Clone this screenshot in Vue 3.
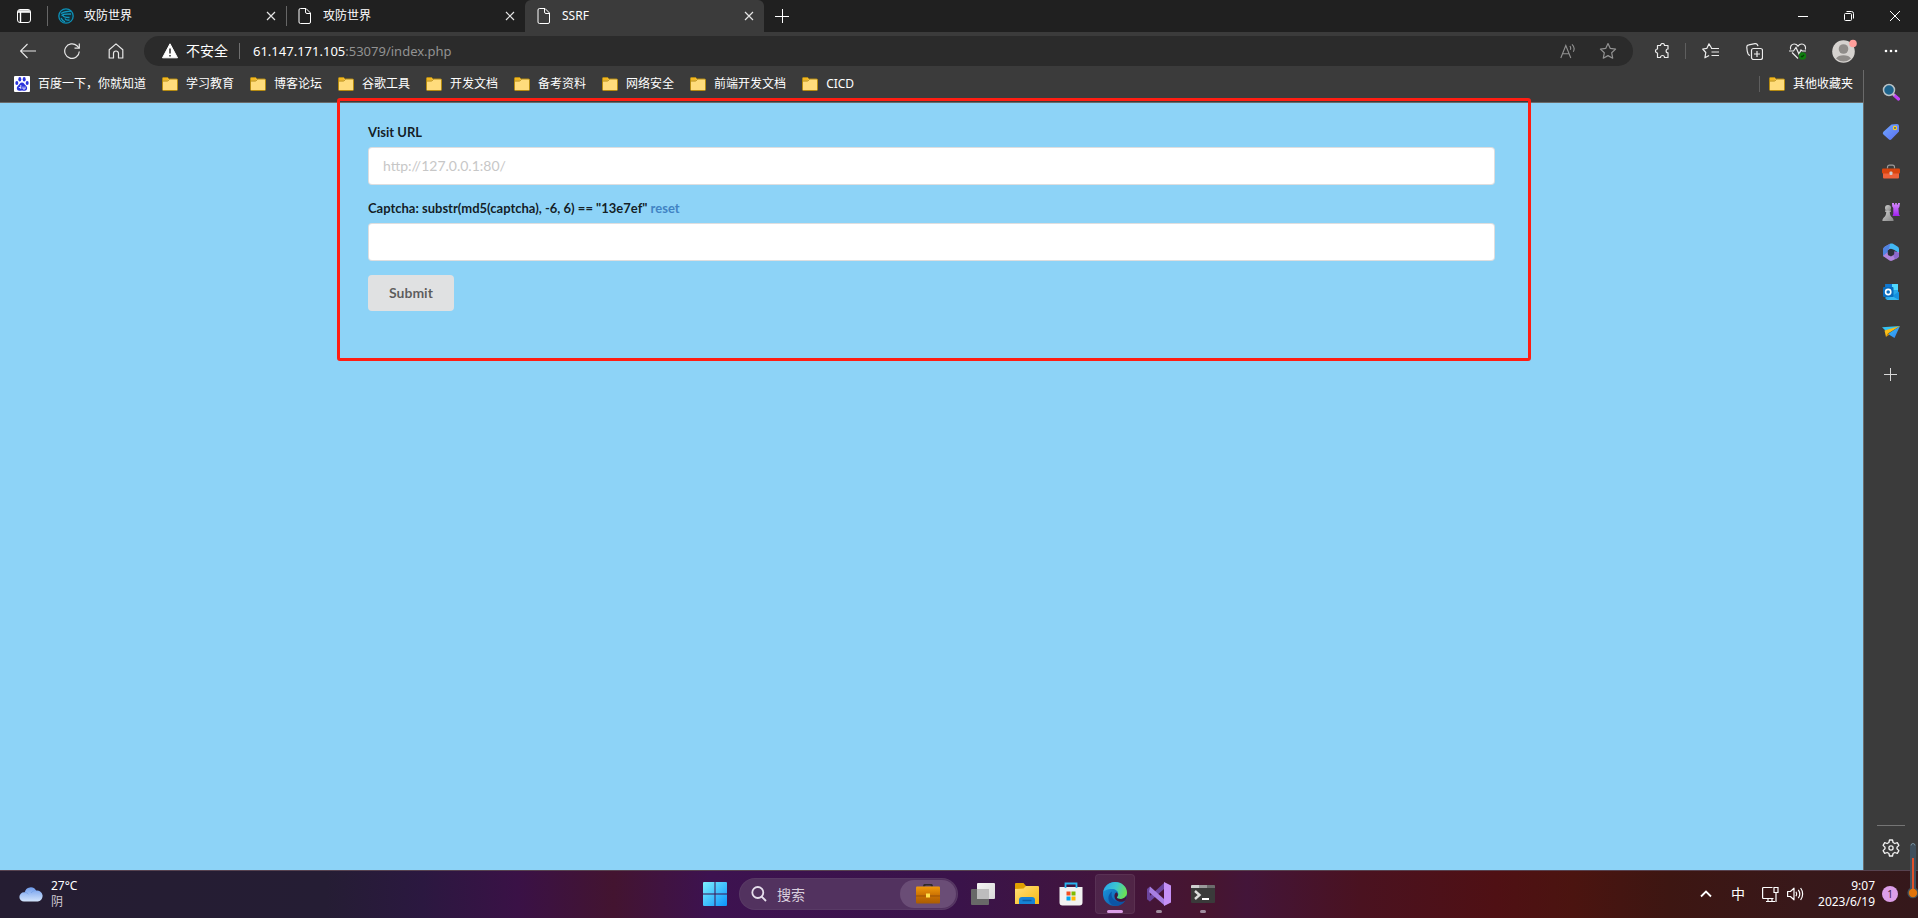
<template>
  <div class="screen">
    <!-- 共用渐变 -->
    <svg class="defs" width="0" height="0" aria-hidden="true">
      <defs>
        <linearGradient id="g-win" x1="0" y1="0" x2="1" y2="1"><stop offset="0" stop-color="#7df0ff"/><stop offset="1" stop-color="#0a93fb"/></linearGradient>
        <linearGradient id="g-cloud" x1="0" y1="0" x2="0" y2="1"><stop offset="0" stop-color="#6f9cec"/><stop offset="1" stop-color="#d3e4fc"/></linearGradient>
        <linearGradient id="g-case" x1="0" y1="0" x2="0" y2="1"><stop offset="0" stop-color="#f09a0c"/><stop offset="0.55" stop-color="#c96f02"/><stop offset="1" stop-color="#a95c03"/></linearGradient>
        <linearGradient id="g-tag" x1="0" y1="0" x2="1" y2="1"><stop offset="0" stop-color="#6fa8ff"/><stop offset="1" stop-color="#5b6ff2"/></linearGradient>
        <linearGradient id="g-pawn" x1="0" y1="0" x2="1" y2="1"><stop offset="0" stop-color="#d0d0d0"/><stop offset="1" stop-color="#858585"/></linearGradient>
        <linearGradient id="g-rook" x1="0" y1="0" x2="0" y2="1"><stop offset="0" stop-color="#d58cff"/><stop offset="1" stop-color="#a020f0"/></linearGradient>
        <linearGradient id="g-folder" x1="0" y1="0" x2="1" y2="1"><stop offset="0" stop-color="#ffe07a"/><stop offset="1" stop-color="#f8b912"/></linearGradient>
        <linearGradient id="g-edge-top" x1="0" y1="0.3" x2="1" y2="0.6"><stop offset="0" stop-color="#2aa7ea"/><stop offset="0.5" stop-color="#3cc6cf"/><stop offset="1" stop-color="#6fe34c"/></linearGradient>
        <linearGradient id="g-edge-bottom" x1="0" y1="0" x2="1" y2="1"><stop offset="0" stop-color="#1b9de2"/><stop offset="1" stop-color="#0a4da0"/></linearGradient>
        <linearGradient id="g-plane" x1="0" y1="0" x2="1" y2="1"><stop offset="0" stop-color="#2ec8f5"/><stop offset="1" stop-color="#3a7cf0"/></linearGradient>
        <linearGradient id="g-view" x1="0" y1="0" x2="1" y2="1"><stop offset="0" stop-color="#f4f4f4"/><stop offset="1" stop-color="#d8d8d8"/></linearGradient>
      </defs>
    </svg>

    <!-- 标签栏 -->
    <header class="titlebar">
      <button class="btn tab-actions" aria-label="Tab actions">
        <svg width="16" height="16" viewBox="0 0 16 16" fill="none" stroke="#fff"><rect x="1.5" y="1.5" width="13" height="13" rx="2.5"/><path d="M2.5 3h11" stroke-width="1.5"/><path d="M2 4h12M4.5 4.5v10" stroke-width="1.4"/></svg>
      </button>
      <div v-for="tab in tabs" :key="tab.id" class="tab" :class="{ 'tab--active': tab.active }">
        <svg v-if="tab.icon === 'globe'" width="16" height="16" viewBox="0 0 16 16"><circle cx="8" cy="8" r="7.2" fill="#10303b" stroke="#0e8fb5" stroke-width="1.3"/><path d="M3 5.5c3-2.5 6-2 10-2.4M3.5 7.5C6 5.5 9 6.5 13 6M5 7.5c.5 2 3 2 6.5 2M7 10.5c.5 1.5 2.5 1.8 4.5 1.5M3 10c1 2 2 3 4 3.8" fill="none" stroke="#1298bf" stroke-width="1.3"/></svg>
        <svg v-else width="16" height="16" viewBox="0 0 16 16" fill="none" stroke="#fff"><path d="M3.5.5h5.5l4.5 4.5v9a1.5 1.5 0 0 1-1.5 1.5H3.5A1.5 1.5 0 0 1 2 14V2A1.5 1.5 0 0 1 3.5.5z"/><path d="M8.5.5v3.5a1.5 1.5 0 0 0 1.5 1.5h3.5"/></svg>
        <span class="tab__title">{{ tab.title }}</span>
        <button class="btn tab__close" aria-label="Close tab">
          <svg width="10" height="10" viewBox="0 0 10 10" stroke="#e4e4e4" stroke-width="1.2"><path d="M1 1l8 8M9 1L1 9"/></svg>
        </button>
      </div>
      <button class="btn new-tab" aria-label="New tab">
        <svg width="14" height="14" viewBox="0 0 14 14" stroke="#fff"><path d="M7.5 0v14M0 7.5h14"/></svg>
      </button>
      <div class="window-controls">
        <button class="btn" aria-label="Minimize"><svg width="10" height="10" viewBox="0 0 10 10" stroke="#fff"><path d="M0 5.5h10"/></svg></button>
        <button class="btn" aria-label="Restore"><svg width="10" height="10" viewBox="0 0 10 10" fill="none" stroke="#fff"><rect x=".5" y="2.5" width="7" height="7" rx="1"/><path d="M2.5.5h5a2 2 0 0 1 2 2v5"/></svg></button>
        <button class="btn" aria-label="Close"><svg width="10" height="10" viewBox="0 0 10 10" stroke="#fff"><path d="M0 0l10 10M10 0L0 10"/></svg></button>
      </div>
    </header>

    <!-- 地址栏 -->
    <nav class="toolbar">
      <button class="btn tool" aria-label="Back"><svg width="16" height="16" viewBox="0 0 16 16" fill="none" stroke="#e8e8e8" stroke-width="1.1"><path d="M16 8H.8M7.5 1l-7 7 7 7"/></svg></button>
      <button class="btn tool" aria-label="Reload"><svg width="16" height="16" viewBox="0 0 16 16" fill="none" stroke="#e8e8e8" stroke-width="1.2"><path d="M15.3 8.5A7.3 7.3 0 1 1 13 2.8l2 2"/><path d="M15.3.5v4.7h-4.8"/></svg></button>
      <button class="btn tool" aria-label="Home"><svg width="16" height="16" viewBox="0 0 16 16" fill="none" stroke="#e8e8e8" stroke-width="1.2"><path d="M1.2 6.8L8 .9l6.8 5.9V15h-4.3v-4.5a2.5 2.5 0 0 0-5 0V15H1.2z" stroke-linejoin="round"/></svg></button>
      <div class="address">
        <svg width="16" height="16" viewBox="0 0 16 16"><path d="M8 .8L15.5 14.8H.5z" fill="#fff" stroke="#fff" stroke-linejoin="round"/><path d="M8 5.5v5M8 12v1.6" stroke="#2b2b2b" stroke-width="1.5"/></svg>
        <span class="address__warn">不安全</span>
        <span class="address__sep"></span>
        <span class="address__url"><b>61.147.171.105</b>:53079/index.php</span>
        <button class="btn address__btn" aria-label="Read aloud"><svg width="16" height="16" viewBox="0 0 16 16" fill="none" stroke="#929292" stroke-width="1.1"><path d="M.8 15L5.8 2.5 10.8 15M2.5 10.8h6.6M9.8 3.2c1 1 1 2.5.5 3.6M12 1.3c2.2 2 2.6 5 1.3 7.5"/></svg></button>
        <button class="btn address__btn" aria-label="Favorite"><svg width="18" height="18" viewBox="0 0 18 18" fill="none" stroke="#929292" stroke-width="1.2" stroke-linejoin="round"><path d="M9 1.5l2.3 4.9 5.3.7-3.9 3.7 1 5.4L9 13.6l-4.7 2.6 1-5.4L1.4 7.1l5.3-.7z"/></svg></button>
      </div>
      <button class="btn tool" aria-label="Extensions"><svg width="16" height="16" viewBox="0 0 16 16" fill="none" stroke="#ececec" stroke-width="1.2" stroke-linejoin="round"><path d="M3.500 2.500h3a2 2 0 0 1 4 0H14V6a1.600 1.600 0 0 0 0 3.800v4.700h-3.500a2 2 0 0 0-4 0h-3V10a2 2 0 0 1 0-4z"/></svg></button>
      <span class="toolbar__sep"></span>
      <button class="btn tool" aria-label="Favorites"><svg width="17" height="16" viewBox="0 0 17 16" fill="none" stroke="#ececec" stroke-width="1.2" stroke-linejoin="round"><path d="M9.5 5L7 .8 4.9 5.3.7 6l3.1 3.5-.9 5.3 4.2-2.3"/><path d="M9 5.5h8M9.5 9h7.5M9.5 12.5h7.5"/></svg></button>
      <button class="btn tool" aria-label="Collections"><svg width="17" height="17" viewBox="0 0 17 17" fill="none" stroke="#ececec" stroke-width="1.2"><rect x="5.5" y="5.5" width="11" height="11" rx="2"/><path d="M11 8v6M8 11h6M4 12.5C2 12 1.5 10 1.2 8L.8 4.5C.6 3 1.5 2 2.8 1.8L9 .7c1.5-.2 2.5.5 3 2.5"/></svg></button>
      <button class="btn tool" aria-label="Browser essentials"><svg width="18" height="17" viewBox="0 0 18 17" fill="none" stroke="#ececec" stroke-width="1.2"><path d="M1.6 6.5C.8 3 3 1 5.2 1 7 1 8.2 2 9 3.2 9.8 2 11 1 12.8 1c2.5 0 4.5 2.5 3.6 5.5M3 9.5l6 6"/><path d="M0 8h4.5L7 4.500l3 6.500 2-4 1.200 1H17"/><circle cx="13.5" cy="13" r="3.7" fill="#107c10" stroke="none"/><path d="M12 13l1 1 2-2" stroke="#053b05"/></svg></button>
      <button class="btn tool tool--wide" aria-label="Profile"><svg width="26" height="24" viewBox="0 0 26 24"><circle cx="12.5" cy="12.5" r="11.3" fill="#d5d2cf"/><circle cx="12.5" cy="10" r="4.8" fill="#8f8c89"/><path d="M5 19.5c2-4.500 13-4.500 15 0a11 11 0 0 1-15 0z" fill="#8f8c89"/><circle cx="22" cy="4.5" r="3.8" fill="#ff9f9b"/></svg></button>
      <button class="btn tool tool--wide" aria-label="Settings and more"><svg width="14" height="4" viewBox="0 0 14 4" fill="#fff"><circle cx="2" cy="2" r="1.3"/><circle cx="7" cy="2" r="1.3"/><circle cx="12" cy="2" r="1.3"/></svg></button>
    </nav>

    <div class="body">
      <div class="content">
        <!-- 收藏夹栏 -->
        <div class="bookmarks">
          <a v-for="item in bookmarks" :key="item" class="bookmark" :class="{ 'bookmark--other': item === '其他收藏夹' }" href="#">
            <svg v-if="item.startsWith('百度')" width="16" height="16" viewBox="0 0 16 16"><rect width="16" height="16" rx="1" fill="#fff"/><g fill="#2a32dc"><ellipse cx="2.8" cy="7" rx="1.5" ry="2"/><ellipse cx="5.8" cy="3.2" rx="1.5" ry="2.2"/><ellipse cx="10.2" cy="3.2" rx="1.5" ry="2.2"/><ellipse cx="13.2" cy="7" rx="1.5" ry="2"/><path d="M8 6.5c2 0 2.5 2 4 3.2 2 1.6 1.3 5-1.2 5-1 0-1.8-.3-2.8-.3s-1.8.3-2.8.3c-2.5 0-3.2-3.4-1.2-5C5.5 8.5 6 6.5 8 6.5z"/></g><path d="M6.8 9v4M4.8 11.5h2M9 10.5V13h2v-2.5" stroke="#fff" stroke-width=".8" fill="none"/></svg>
            <svg v-else width="16" height="14" viewBox="0 0 16 14"><path d="M.5 1.5a1 1 0 0 1 1-1h4L7.2 2h7.3a1 1 0 0 1 1 1v9.5a1 1 0 0 1-1 1h-13a1 1 0 0 1-1-1z" fill="#ffdc7c" stroke="#b58a10"/><path d="M1 1h4.5l1 1.2L5.3 3.5H1z" fill="#f3b61f"/><path d="M.8 4h5L7.3 2.3" stroke="#b58a10" fill="none"/></svg>
            <span>{{ item }}</span>
          </a>
        </div>

        <main class="page">
          <form class="form" @submit.prevent>
            <div class="field">
              <label for="url">Visit URL</label>
              <input id="url" v-model="url" type="text" placeholder="http://127.0.0.1:80/">
            </div>
            <div class="field">
              <label for="captcha">Captcha: substr(md5(captcha), -6, 6) == "13e7ef" <a href="#">reset</a></label>
              <input id="captcha" v-model="captcha" type="text">
            </div>
            <button class="submit" type="submit">Submit</button>
            <div class="marker"></div>
          </form>
        </main>
      </div>

      <!-- 右侧边栏 -->
      <aside class="sidebar">
        <button class="btn side" aria-label="Search"><svg width="18" height="18" viewBox="0 0 18 18"><path d="M12 12l4.5 4" stroke="#c040f5" stroke-width="3.2" stroke-linecap="round"/><path d="M10 10l2.5 2.5" stroke="#b9b9b9" stroke-width="2"/><circle cx="7" cy="7" r="5.5" fill="#1d638c" stroke="#b9c2c6" stroke-width="1.5"/></svg></button>
        <button class="btn side" aria-label="Shopping"><svg width="18" height="18" viewBox="0 0 18 18"><path d="M9.5 1.5L15 1a2 2 0 0 1 2 2v5.5l-7.5 7.8a2 2 0 0 1-2.800 0L1.4 11.5a2 2 0 0 1 0-2.8z" fill="url(#g-tag)"/><circle cx="13" cy="5" r="1.6" fill="#3958a8" stroke="#ffd21f" stroke-width="1.2"/></svg></button>
        <button class="btn side" aria-label="Tools"><svg width="18" height="16" viewBox="0 0 18 16"><path d="M5.5 4.500V3.200a2 2 0 0 1 2-2h3a2 2 0 0 1 2 2v1.300" fill="none" stroke="#9c9c9c" stroke-width="1.2"/><path d="M1 9h16v4.5a1 1 0 0 1-1 1H2a1 1 0 0 1-1-1z" fill="#ee6239"/><rect x="0" y="4.5" width="18" height="5" rx="1" fill="#d8450f"/><rect x="7.5" y="7.5" width="3" height="3.5" rx="1" fill="#cfcfcf"/></svg></button>
        <button class="btn side" aria-label="Games"><svg width="18" height="18" viewBox="0 0 18 18"><path d="M10 0h2v1.5h1.2V0h1.6v1.5H16V0h2l-.6 4-1 1.2.5 6 1.1 1.8h-7.5l.8-2V5L10.2 3.5z" fill="url(#g-rook)"/><circle cx="6" cy="5" r="3" fill="url(#g-pawn)"/><path d="M3 7.5h6v1.3H7.7c.2 3 .8 4.4 2.5 5.7 1.2.8 1.6 3.500 1.300 3.500H.5c-.3 0 .1-2.700 1.300-3.500 1.700-1.300 2.300-2.700 2.500-5.700H3z" fill="url(#g-pawn)"/></svg></button>
        <button class="btn side" aria-label="Microsoft 365"><svg width="18" height="18" viewBox="0 0 18 18"><path d="M8 .8L3 3.500a4 4 0 0 0-2 3.500v6l4.800 2V7.500L9 5z" fill="#8a7fe0"/><path d="M8 .8c1-.5 2-.5 3 0L15.500 3.500A3 3 0 0 1 17 6v4l-5-3.200-5-1.300z" fill="#42b8f3"/><path d="M8 .8L7 5.500 5.800 8v4L1 13V7a4 4 0 0 1 2-3.500z" fill="#4f83e0"/><path d="M1 13l4.800-4v3l3.200 1.500 3.200-2V9l4.800 0v3.500a3 3 0 0 1-1.500 2.500L10.500 17.500c-1 .5-2 .5-3 0z" fill="#b184dc"/><path d="M17 10v2.500a3 3 0 0 1-1.500 2.500L13 16.300l-2-4 1.200-1V8z" fill="#8b68cb"/><path d="M9 5.700l3.200 1.800v3.600L9 12.900l-3.200-1.800V7.500z" fill="#2c2f38"/></svg></button>
        <button class="btn side" aria-label="Outlook"><svg width="18" height="18" viewBox="0 0 18 18"><rect x="3.5" y="1" width="12.5" height="15" fill="#28a8ea"/><path d="M10 1h6v6h-6z" fill="#50d9ff"/><path d="M3.5 1H10v5H3.5z" fill="#0f78d4"/><path d="M17 8.5V17H4l7-4.500z" fill="#1490df"/><path d="M4 17l6-4 7 4z" fill="#35b8f1"/><rect x="1" y="4" width="10.5" height="10" rx="1" fill="#0a6cbd"/><circle cx="6.2" cy="9" r="2.6" fill="none" stroke="#fff" stroke-width="1.6"/></svg></button>
        <button class="btn side" aria-label="Drop"><svg width="18" height="14" viewBox="0 0 18 14"><path d="M0 2.2L18 1 5 7z" fill="#35c3f3"/><path d="M18 1l-5.5 12-6.5-4z" fill="url(#g-plane)"/><path d="M18 1L2.5 5.5 4 12l2-3.5z" fill="#f9bd17"/><path d="M4 12l2-3.5 1.5 1z" fill="#d98d00"/></svg></button>
        <button class="btn side side--add" aria-label="Add"><svg width="14" height="14" viewBox="0 0 14 14" stroke="#d8d8d8"><path d="M6.5 0v13M0 6.5h13"/></svg></button>
        <div class="sidebar__bottom">
          <button class="btn side" aria-label="Settings"><svg width="18" height="18" viewBox="0 0 18 18" fill="none" stroke="#f2f2f2" stroke-width="1.3" stroke-linejoin="round"><path d="M7.5 1h3l.6 2.5 1.7 1 2.5-.8 1.6 2.7L15 8.2v1.6l1.9 1.8-1.6 2.7-2.5-.8-1.7 1-.6 2.5h-3l-.6-2.5-1.7-1-2.5.8-1.6-2.7L3 9.8V8.2L1.1 6.400l1.600-2.700 2.500.800 1.700-1z"/><circle cx="9" cy="9" r="2.1"/></svg></button>
        </div>
      </aside>
    </div>

    <!-- 任务栏 -->
    <footer class="taskbar">
      <button class="btn weather">
        <svg width="24" height="16" viewBox="0 0 24 16"><path d="M5 15.5a4.5 4.5 0 0 1 0-9.2h.8A6 6 0 0 1 17 4.5a5.5 5.5 0 0 1 2 11z" fill="url(#g-cloud)"/><path d="M5.8 6.3c2 .2 3 1 3.6 2M12 7c1.5-2 3-2.5 5-2.5" stroke="#7ba4ea" fill="none"/></svg>
        <span class="weather__text">27°C<br><em>阴</em></span>
      </button>

      <div class="dock">
        <button class="btn dock__item" aria-label="Start"><svg width="24" height="24" viewBox="0 0 24 24" fill="url(#g-win)"><path d="M0 1a1 1 0 0 1 1-1h10.5v11.5H0zM12.5 0H23a1 1 0 0 1 1 1v10.5H12.500zM0 12.500h11.500V24H1a1 1 0 0 1-1-1zM12.500 12.500H24V23a1 1 0 0 1-1 1H12.500z"/></svg></button>
        <div class="search">
          <svg width="16" height="16" viewBox="0 0 16 16" fill="none" stroke="#e6deec" stroke-width="1.8"><circle cx="6.8" cy="6.5" r="5.5"/><path d="M10.5 10.5l4.5 4.5"/></svg>
          <input type="text" aria-label="搜索" placeholder="搜索">
          <span class="search__badge"><svg width="24" height="20" viewBox="0 0 24 20"><path d="M8 2.5C8 .5 9 .5 10 .5h4c1 0 2 0 2 2" fill="none" stroke="#2f2a2a" stroke-width="2"/><rect y="2.5" width="24" height="17" rx="1" fill="url(#g-case)"/><path d="M0 11h24v2H0z" fill="#b06005"/><rect x="10" y="9.5" width="4" height="4" fill="#ffe04a"/></svg></span>
        </div>
        <button class="btn dock__item" aria-label="Task view"><svg width="24" height="24" viewBox="0 0 24 24"><rect x="0" y="7" width="18" height="16" rx="1" fill="#686868"/><rect x="6" y="1" width="18" height="16" rx="1" fill="url(#g-view)"/><path d="M6 7h12v10H6z" fill="#bdbcbd"/></svg></button>
        <button class="btn dock__item" aria-label="File explorer"><svg width="24" height="24" viewBox="0 0 24 24"><path d="M0 2a1 1 0 0 1 1-1h7.5L11 4v4H0z" fill="#e0a000"/><path d="M0 7l8.5-.5L11 4h12a1 1 0 0 1 1 1v17H0z" fill="url(#g-folder)"/><path d="M4 22v-4a3 3 0 0 1 3-3h10a3 3 0 0 1 3 3v4z" fill="#1683d6"/><path d="M7.5 18.5h9" stroke="#0c5da5" stroke-width="1.5"/></svg></button>
        <button class="btn dock__item" aria-label="Store"><svg width="24" height="24" viewBox="0 0 24 24"><path d="M.5 5h23v15.5a3 3 0 0 1-3 3h-17a3 3 0 0 1-3-3z" fill="#f2f2f2"/><path d="M6.5 6V1.500h11V6" fill="none" stroke="#28b4ef" stroke-width="1.8"/><path d="M7.500 9.500h4v4h-4z" fill="#f25022"/><path d="M12.500 9.500h4v4h-4z" fill="#7fba00"/><path d="M7.500 14.500h4v4h-4z" fill="#00a4ef"/><path d="M12.500 14.500h4v4h-4z" fill="#ffb900"/></svg></button>
        <button class="btn dock__item dock__item--active" aria-label="Edge"><svg width="24" height="24" viewBox="0 0 24 24"><circle cx="12" cy="12" r="12" fill="url(#g-edge-bottom)"/><path d="M.2 10C1.500 3.500 6.500 0 12 0c7 0 12 5 12 10.500 0 4-3 6.500-6.500 6.500-2.500 0-4-1-3.500-2 1-1 1.300-2 1.300-3 0-3-3-5-6.300-5C4.500 7 1 8.500.2 10z" fill="url(#g-edge-top)"/><path d="M9 9.500c-1.500 4.500.5 10 8 10.500 2 .1 4-.6 5.300-1.600C19.500 23 14.500 24.500 10.500 23.500 4 21.500 4 12.500 9 9.500z" fill="#0b55a6"/><path d="M14 15c-.6 1 1 2 3.500 2 2.700 0 4.800-1.300 5.800-3.400.5 2-.2 4-1.200 5-3 2.300-10.100 1.500-10.600-4.100-.2-1.700.5-3.500 2-4.300 1.500 1 2 3 .5 4.800z" fill="#42163c"/></svg></button>
        <button class="btn dock__item dock__item--open" aria-label="Visual Studio"><svg width="24" height="24" viewBox="0 0 24 24"><path d="M17 1L4.500 12.500 2 14.500V9.500L0 7v10l3 2.500L17 7z" fill="#6b459f"/><path d="M0 7l3-2.500V19.500L0 17z" fill="#6b459f"/><path d="M3 4.500L17 17v6L2 10z" fill="#a77fe2"/><path d="M17 0l7 3.500v17L17 24V0z" fill="#c590f7"/></svg></button>
        <button class="btn dock__item dock__item--open" aria-label="Terminal"><svg width="24" height="24" viewBox="0 0 24 24"><rect y="3" width="24" height="18" rx="1" fill="#3a3a3a"/><path d="M0 6V4a1 1 0 0 1 1-1h7v3z" fill="#cfcfcf"/><path d="M8 3h8v3H8z" fill="#9a9a9a"/><path d="M16 3h7a1 1 0 0 1 1 1v2h-8z" fill="#6c6c6c"/><path d="M4 9l4.500 4L4 17" stroke="#ddd" stroke-width="2.4" fill="none"/><path d="M11 17h7" stroke="#fff" stroke-width="2"/></svg></button>
      </div>

      <div class="tray">
        <button class="btn tray__chevron" aria-label="Hidden icons"><svg width="12" height="8" viewBox="0 0 12 8" fill="none" stroke="#fff" stroke-width="1.8"><path d="M1 6.5l5-5 5 5"/></svg></button>
        <button class="btn tray__ime">中</button>
        <button class="btn tray__status" aria-label="Network and volume">
          <svg width="17" height="17" viewBox="0 0 17 17" fill="none" stroke="#fff" stroke-width="1.2"><path d="M10.5 1.5h-9a.9.9 0 0 0-.9.9v9.2a.9.9 0 0 0 .9.9h10M4 15.5h9M6 12.500v3M10 12.500v3M12 1.500h4v5h-4zM14 6.500v9.500"/></svg>
          <svg width="17" height="14" viewBox="0 0 17 14" fill="none" stroke="#fff" stroke-width="1.2"><path d="M.6 4.500h2.800L7 1.200v11.600L3.400 9.500H.6z" stroke-linejoin="round"/><path d="M9 4.700c.9 1.400.9 3.200 0 4.600M11.300 2.800c1.800 2.500 1.800 5.900 0 8.400M13.600 1c2.700 3.500 2.700 8.500 0 12"/></svg>
        </button>
        <button class="btn clock">9:07<br>2023/6/19</button>
        <span class="tray__count">1</span>
      </div>
    </footer>

    <!-- 悬浮温度计 -->
    <svg class="thermo" width="12" height="56" viewBox="0 0 12 56"><path d="M3 4a3 3 0 0 1 6 0v41a5.600 5.600 0 1 1-6 0z" fill="#3f4f5c"/><path d="M4 2.500a2 2 0 0 1 4 0" fill="none" stroke="#77909f"/><path d="M6 15v35" stroke="#e0502a" stroke-width="2"/><circle cx="6" cy="50" r="4.200" fill="#e0740c"/></svg>
  </div>
</template>

<script setup>
import { ref } from 'vue'

const url = ref('')
const captcha = ref('')

const tabs = [
  { id: 1, title: '攻防世界', icon: 'globe', active: false },
  { id: 2, title: '攻防世界', icon: 'file', active: false },
  { id: 3, title: 'SSRF', icon: 'file', active: true }
]

const bookmarks = [
  '百度一下，你就知道',
  '学习教育',
  '博客论坛',
  '谷歌工具',
  '开发文档',
  '备考资料',
  '网络安全',
  '前端开发文档',
  'CICD',
  '其他收藏夹'
]
</script>

<style>
body {
  margin: 0;
  background: #8dd3f7;
}
</style>

<style scoped>
.screen {
  position: relative;
  display: flex;
  flex-direction: column;
  min-height: 100vh;
  font-family: "Noto Sans", "Noto Sans CJK SC", sans-serif;
  font-size: 12px;
  line-height: 16px;
  color: #fff;
}

.screen *,
.screen *::before {
  box-sizing: border-box;
}

.defs {
  position: absolute;
}

.btn {
  display: flex;
  align-items: center;
  justify-content: center;
  padding: 0;
  border: none;
  background: none;
  color: inherit;
  font: inherit;
}

svg {
  flex: none;
}

/* 标签栏 */
.titlebar {
  display: flex;
  height: 32px;
  background: #202020;
}

.tab-actions {
  width: 47px;
  height: 26px;
  align-self: center;
}

.tab {
  display: flex;
  align-items: center;
  gap: 10px;
  flex: 0 1 239px;
  min-width: 0;
  padding: 0 10px 0 11px;
  background: linear-gradient(#666, #666) left center / 1px 20px no-repeat;
}

.tab--active {
  background: #3b3b3b;
  border-radius: 6px 6px 0 0;
}

.tab__title {
  flex: 1;
  white-space: nowrap;
  overflow: hidden;
}

.new-tab {
  width: 36px;
}

.window-controls {
  display: flex;
  margin-left: auto;
}

.window-controls .btn {
  width: 46px;
}

/* 地址栏 */
.toolbar {
  display: flex;
  align-items: center;
  height: 38px;
  padding: 0 4px 0 6px;
  background: #3b3b3b;
}

.tool {
  width: 44px;
  height: 30px;
}

.tool--wide {
  width: 47px;
}

.address {
  flex: 1;
  display: flex;
  align-items: center;
  height: 30px;
  margin: 0 7px 0 6px;
  padding: 0 5px 0 18px;
  border-radius: 15px;
  background: #2b2b2b;
}

.address__warn {
  margin-left: 8px;
  font-size: 14px;
}

.address__sep {
  width: 1px;
  height: 16px;
  margin: 0 13px 0 11px;
  background: #6f6f6f;
}

.address__url {
  flex: 1;
  font-size: 13px;
  color: #929292;
}

.address__url b {
  font-weight: 400;
  color: #fff;
}

.address__btn {
  width: 40px;
}

.toolbar__sep {
  width: 1px;
  height: 16px;
  margin: 0 2px 0 1px;
  background: #5e5e5e;
}

/* 主体 */
.body {
  flex: 1;
  display: flex;
}

.content {
  flex: 1;
  display: flex;
  flex-direction: column;
  min-width: 0;
}

.bookmarks {
  display: flex;
  align-items: center;
  gap: 16px;
  height: 33px;
  padding: 0 10px 4px 14px;
  background: #3b3b3b;
  border-bottom: 1px solid #6a6a6a;
}

.bookmark {
  display: flex;
  align-items: center;
  gap: 8px;
  color: #fff;
  text-decoration: none;
  white-space: nowrap;
}

.bookmark--other {
  margin-left: auto;
  padding-left: 10px;
  background: linear-gradient(#5e5e5e, #5e5e5e) left center / 1px 16px no-repeat;
}

.page {
  flex: 1;
  background: #8dd3f7;
  color: rgba(0, 0, 0, 0.87);
  font-family: Lato, "Liberation Sans", sans-serif;
}

.form {
  position: relative;
  width: calc(100% - 80px);
  max-width: 1127px;
  margin: 0 auto;
  padding: 20px 0 50px;
}

.field {
  margin-bottom: 14px;
}

.field label {
  display: block;
  margin-bottom: 5px;
  font-size: 13px;
  font-weight: 700;
  line-height: 19px;
}

.field a {
  color: #4183c4;
  text-decoration: none;
}

.field input {
  display: block;
  width: 100%;
  height: 38px;
  padding: 0 14px 2px;
  border: 1px solid rgba(34, 36, 38, 0.15);
  border-radius: 4px;
  background: #fff;
  font-family: inherit;
  font-size: 14px;
  outline: none;
}

.field input::placeholder {
  color: #c7c7c7;
}

.submit {
  display: block;
  height: 36px;
  padding: 0 21px 2px;
  border: none;
  border-radius: 4px;
  background: #e0e1e2;
  color: rgba(0, 0, 0, 0.6);
  font-family: inherit;
  font-size: 14px;
  font-weight: 700;
}

.marker {
  position: absolute;
  inset: -5px -36px 0 -31px;
  border: 3px solid #ff1d12;
  border-radius: 3px;
  pointer-events: none;
}

/* 侧边栏 */
.sidebar {
  display: flex;
  flex-direction: column;
  align-items: center;
  width: 55px;
  padding-top: 2px;
  background: #3b3b3b;
  border-left: 1px solid #6a6a6a;
}

.side {
  width: 40px;
  height: 40px;
}

.side--add {
  margin-top: 3px;
}

.sidebar__bottom {
  display: flex;
  justify-content: center;
  width: 28px;
  margin-top: auto;
  padding: 2px 0;
  border-top: 1px solid #757575;
}

/* 任务栏 */
.taskbar {
  display: grid;
  grid-template-columns: 1fr auto 1fr;
  align-items: center;
  height: 48px;
  padding-bottom: 1px;
  border-top: 1px solid #574350;
  background: linear-gradient(90deg, #251d32 0%, #251d34 17%, #2b1840 22%, #3a1146 27%, #431430 32%, #3d1250 37%, #3a134a 50%, #42153c 58%, #47152f 63%, #431539 65%, #4a1220 71%, #4f1014 78%, #4b1410 82%, #3d1612 87%, #38181a 94%, #35181b 100%);
}

.weather {
  justify-self: start;
  gap: 8px;
  margin-left: 19px;
  text-align: left;
}

.weather em {
  font-style: normal;
  color: #cfcad2;
}

.dock {
  display: flex;
  align-items: center;
}

.dock__item {
  position: relative;
  width: 40px;
  height: 40px;
  margin: 0 2px;
  border-radius: 4px;
}

.dock__item--active {
  background: rgba(255, 255, 255, 0.07);
  box-shadow: inset 0 0 0 1px rgba(255, 255, 255, 0.06);
}

.dock__item--active::before,
.dock__item--open::before {
  content: "";
  position: absolute;
  bottom: 1px;
  left: 17px;
  width: 6px;
  height: 3px;
  border-radius: 2px;
  background: #a08d9f;
}

.dock__item--active::before {
  left: 12px;
  width: 16px;
  background: #dc9ee8;
}

.search {
  display: flex;
  align-items: center;
  width: 219px;
  height: 32px;
  margin: 0 3px 0 2px;
  padding: 0 1px 0 11px;
  border: 1px solid rgba(255, 255, 255, 0.04);
  border-radius: 16px;
  background: #52325f;
}

.search input {
  flex: 1;
  min-width: 0;
  padding: 0 10px;
  border: none;
  background: none;
  color: #fff;
  font-family: inherit;
  font-size: 14px;
  outline: none;
}

.search input::placeholder {
  color: #d9cfde;
}

.search__badge {
  display: flex;
  align-items: center;
  justify-content: center;
  width: 56px;
  height: 28px;
  border-radius: 14px;
  background: #6a4d76;
}

.tray {
  display: flex;
  align-items: center;
  justify-self: end;
  padding-right: 20px;
}

.tray__chevron {
  width: 24px;
}

.tray__ime {
  width: 40px;
  font-size: 14px;
}

.tray__status {
  gap: 8px;
  margin: 0 14px 0 4px;
}

.clock {
  text-align: right;
}

.tray__count {
  width: 16px;
  height: 16px;
  margin-left: 7px;
  border-radius: 50%;
  background: #dc9ee8;
  color: #3c2140;
  font-size: 10px;
  text-align: center;
}

.thermo {
  position: absolute;
  right: -1px;
  bottom: 19px;
}
</style>
